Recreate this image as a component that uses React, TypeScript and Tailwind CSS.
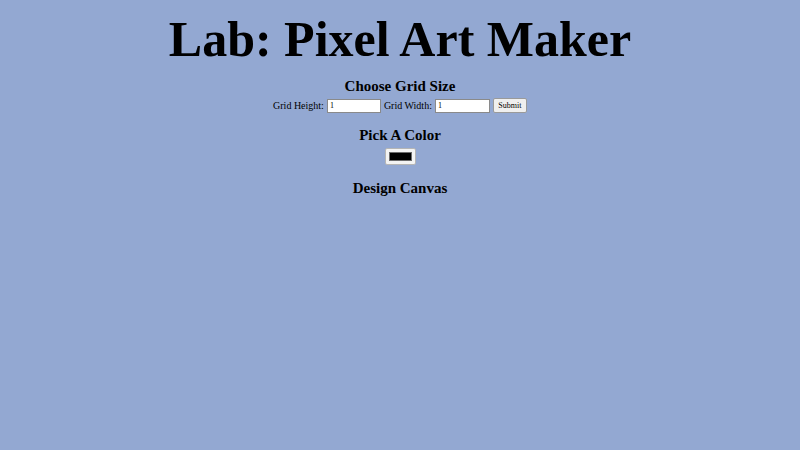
export default function App() {
  return (
    <div className="min-h-[450px] w-full bg-[#93a8d2] text-black font-['Liberation_Serif','Times_New_Roman',serif] flex flex-col items-center">
      <h1 className="mt-[14px] text-[50px] leading-[50px] font-bold">Lab: Pixel Art Maker</h1>

      <h2 className="mt-[15px] text-[15px] leading-[15px] font-bold">Choose Grid Size</h2>
      <form className="mt-[4px] flex items-center h-[15px] text-[10px]" onSubmit={(e) => e.preventDefault()}>
        <label>Grid Height:</label>
        <input
          type="number"
          defaultValue={1}
          className="ml-[3px] w-[54px] h-[14px] bg-white text-black border border-[#8a8a8a] px-[2px] text-[8px] outline-none"
        />
        <label className="ml-[3px]">Grid Width:</label>
        <input
          type="number"
          defaultValue={1}
          className="ml-[3px] w-[55px] h-[14px] bg-white text-black border border-[#8a8a8a] px-[2px] text-[8px] outline-none"
        />
        <button
          type="submit"
          className="ml-[3px] w-[34px] h-[15px] bg-[#efefef] text-black border border-[#9a9a9a] rounded-[2px] text-[8px] leading-none"
        >
          Submit
        </button>
      </form>

      <h2 className="mt-[15px] text-[15px] leading-[15px] font-bold">Pick A Color</h2>
      <div className="mt-[5px] w-[31px] h-[17px] bg-[#f3f3f3] border border-[#b5b5b5] rounded-[2px] p-[3px]">
        <div className="w-full h-full bg-black border border-[#6b6b6b]" />
      </div>

      <h2 className="mt-[16px] text-[15px] leading-[15px] font-bold">Design Canvas</h2>
      <table className="mt-[8px] border-collapse">
        <tbody />
      </table>
    </div>
  );
}
